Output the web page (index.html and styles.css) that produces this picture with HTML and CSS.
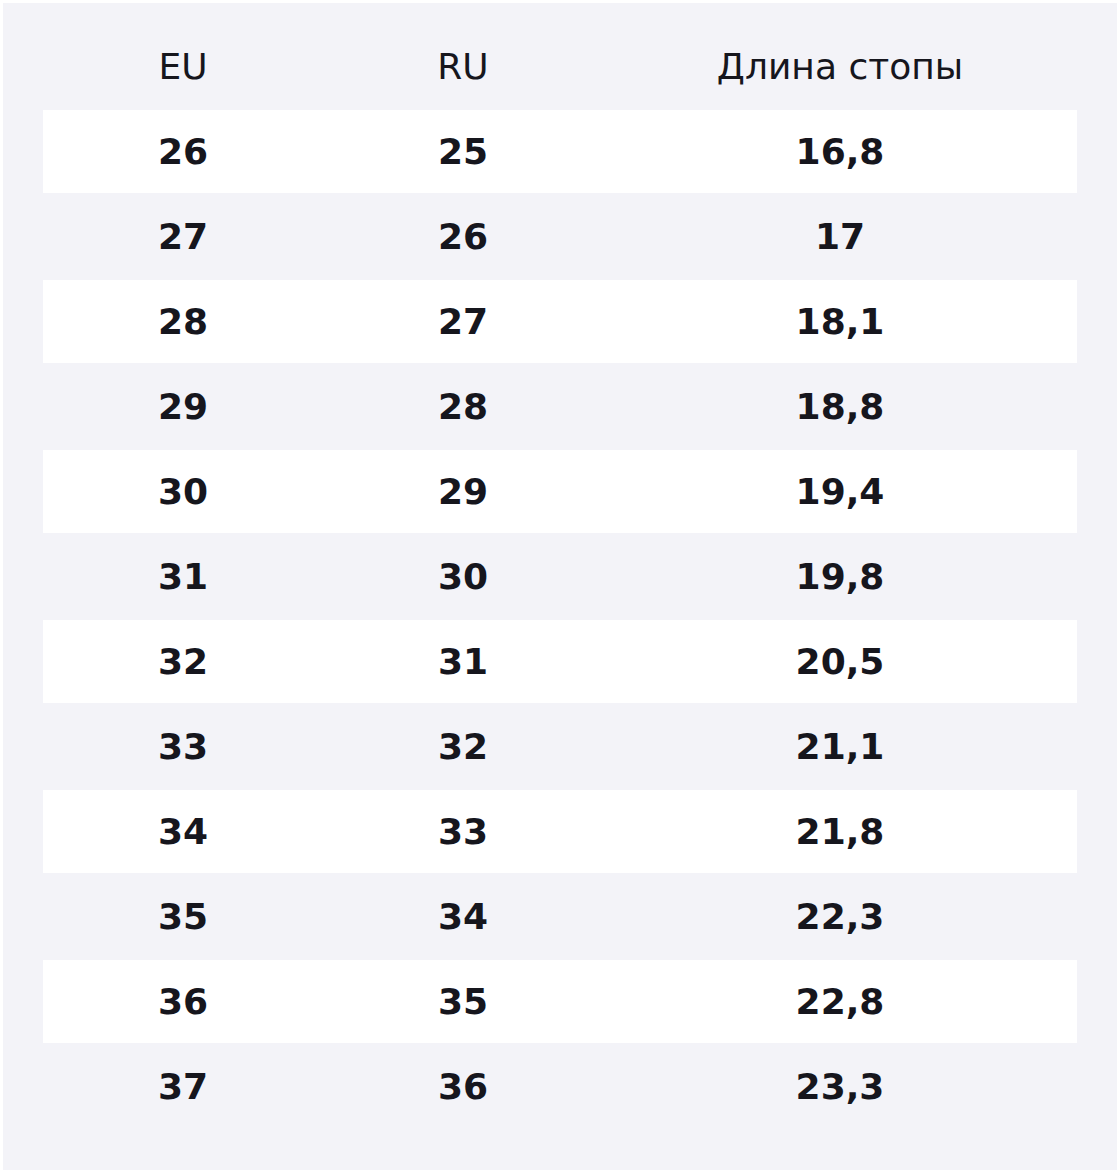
FILE: index.html
```html
<!DOCTYPE html>
<html lang="ru">
<head>
<meta charset="utf-8">
<link rel="stylesheet" href="styles.css">
</head>
<body>
<div class="card">
  <div class="table">
    <div class="row head"><div class="c">EU</div><div class="c">RU</div><div class="c">Длина стопы</div></div>
    <div class="row odd"><div class="c">26</div><div class="c">25</div><div class="c">16,8</div></div>
    <div class="row"><div class="c">27</div><div class="c">26</div><div class="c">17</div></div>
    <div class="row odd"><div class="c">28</div><div class="c">27</div><div class="c">18,1</div></div>
    <div class="row"><div class="c">29</div><div class="c">28</div><div class="c">18,8</div></div>
    <div class="row odd"><div class="c">30</div><div class="c">29</div><div class="c">19,4</div></div>
    <div class="row"><div class="c">31</div><div class="c">30</div><div class="c">19,8</div></div>
    <div class="row odd"><div class="c">32</div><div class="c">31</div><div class="c">20,5</div></div>
    <div class="row"><div class="c">33</div><div class="c">32</div><div class="c">21,1</div></div>
    <div class="row odd"><div class="c">34</div><div class="c">33</div><div class="c">21,8</div></div>
    <div class="row"><div class="c">35</div><div class="c">34</div><div class="c">22,3</div></div>
    <div class="row odd"><div class="c">36</div><div class="c">35</div><div class="c">22,8</div></div>
    <div class="row"><div class="c">37</div><div class="c">36</div><div class="c">23,3</div></div>
  </div>
</div>
</body>
</html>
```
FILE: styles.css
```css
html, body { margin: 0; padding: 0; background: #ffffff; }
body { padding: 3px; }
.card {
  background: #f3f3f8;
  height: 1167px;
  box-sizing: border-box;
  padding: 40px 40px 42px;
  font-family: "DejaVu Sans", sans-serif;
  color: #16161d;
}
.table { display: flex; flex-direction: column; gap: 2px; }
.row {
  display: grid;
  grid-template-columns: 280px 280px 1fr;
  height: 83px;
  align-items: center;
  font-size: 36px;
  font-weight: bold;
}
.row.odd { background: #ffffff; }
.row.head {
  height: 65px;
  font-weight: normal;
  align-items: start;
  box-sizing: border-box;
  line-height: 48px;
}
.c { text-align: center; }
```
